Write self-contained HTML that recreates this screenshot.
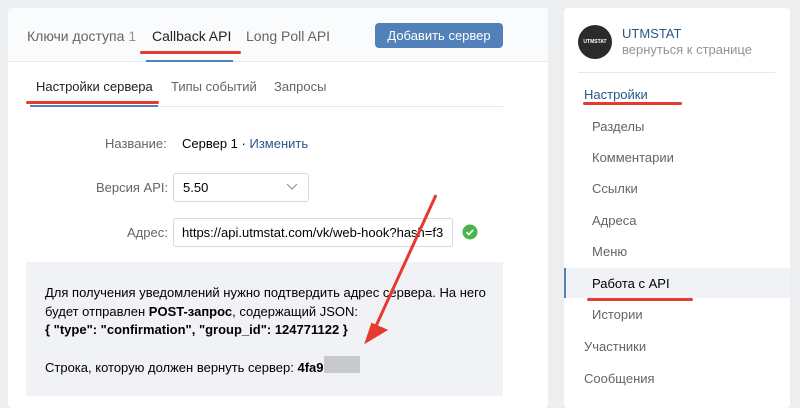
<!DOCTYPE html>
<html><head><meta charset="utf-8"><style>
*{margin:0;padding:0;box-sizing:border-box}
body{width:800px;height:400px;overflow:hidden;background:#edeef0;font-family:"Liberation Sans",sans-serif;font-size:13px;color:#000;position:relative}
.a{position:absolute;white-space:nowrap}
.card{position:absolute;background:#fff;border-radius:4px}
.g{color:#656565}
.m{color:#2a5885}
.red{position:absolute;height:3px;background:#e63a2e;border-radius:2px}
</style></head><body>
<div class="card" style="left:8px;top:8px;width:540px;height:400px"></div>
<div class="a" style="left:8px;top:8px;width:540px;height:54px;background:#fafbfc;border-bottom:1px solid #e7e8ec;border-radius:4px 4px 0 0"></div>
<div class="a g" style="left:27px;top:28px;font-size:14px">Ключи доступа <span style="color:#939393">1</span></div>
<div class="a" style="left:152px;top:28px;font-size:14px;color:#222">Callback API</div>
<div class="a g" style="left:246px;top:28px;font-size:14px">Long Poll API</div>
<div class="a" style="left:146px;top:60px;width:87px;height:2px;background:#5181b8"></div>
<div class="a" style="left:375px;top:23px;width:128px;height:25px;background:#5181b8;border-radius:4px;color:#fff;font-size:13px;text-align:center;line-height:25px">Добавить сервер</div>
<div class="a" style="left:30px;top:106px;width:473px;height:1px;background:#e7e8ec"></div>
<div class="a" style="left:30px;top:105px;width:128px;height:2px;background:#5181b8"></div>
<div class="a" style="left:36px;top:79px;color:#222;font-size:13px">Настройки сервера</div>
<div class="a g" style="left:171px;top:79px">Типы событий</div>
<div class="a g" style="left:274px;top:79px">Запросы</div>
<div class="a g" style="left:105px;top:136px">Название:</div>
<div class="a" style="left:182px;top:136px">Сервер 1 · <span class="m">Изменить</span></div>
<div class="a g" style="left:96px;top:180px">Версия API:</div>
<div class="a" style="left:173px;top:173px;width:136px;height:29px;border:1px solid #d3d9de;border-radius:3px;padding:6px 0 0 9px">5.50</div>
<svg class="a" style="left:286px;top:183px" width="12" height="8"><path d="M1 1l5 5 5-5" stroke="#939393" fill="none" stroke-width="1.2"/></svg>
<div class="a g" style="left:127px;top:225px">Адрес:</div>
<div class="a" style="left:173px;top:218px;width:280px;height:29px;border:1px solid #d3d9de;border-radius:3px;padding:6px 0 0 8px;overflow:hidden">https://api.utmstat.com/vk/web-hook?hash=f3</div>
<svg class="a" style="left:462px;top:224px" width="16" height="16"><circle cx="8" cy="8" r="7.5" fill="#4bb34b"/><path d="M4.5 8.2l2.3 2.3 4.5-4.6" stroke="#fff" stroke-width="1.7" fill="none"/></svg>
<div class="a" style="left:26px;top:262px;width:477px;height:134px;background:#f0f2f5"></div>
<div class="a" style="left:45px;top:284px;line-height:18.5px;color:#000">Для получения уведомлений нужно подтвердить адрес сервера. На него<br>будет отправлен <b>POST-запрос</b>, содержащий JSON:<br><b>{ "type": "confirmation", "group_id": 124771122 }</b></div>
<div class="a" style="left:45px;top:360px">Строка, которую должен вернуть сервер: <b>4fa9</b></div>
<div class="a" style="left:324px;top:356px;width:36px;height:17px;background:#c8c9cc"></div>
<div class="red" style="left:140px;top:51px;width:101px"></div>
<div class="red" style="left:26px;top:101px;width:133px"></div>
<svg class="a" style="left:0;top:0" width="800" height="400"><path d="M436 195L376 326" stroke="#e63a2e" stroke-width="3"/><path d="M366 342l20-12-14-6z" fill="#e63a2e" stroke="#e63a2e" stroke-width="2"/></svg>
<div class="card" style="left:564px;top:8px;width:226px;height:400px"></div>
<div class="a" style="left:578px;top:25px;width:34px;height:34px;border-radius:50%;background:#2b2b2b;color:#fff;font-size:5px;font-weight:bold;text-align:center;line-height:34px">UTMSTAT</div>
<div class="a" style="left:622px;top:26px;color:#2a5885">UTMSTAT</div>
<div class="a" style="left:622px;top:42px;color:#939393">вернуться к странице</div>
<div class="a" style="left:578px;top:72px;width:197px;height:1px;background:#e7e8ec"></div>
<div class="a" style="left:584px;top:87px;color:#2a5885">Настройки</div>
<div class="a g" style="left:592px;top:119px">Разделы</div>
<div class="a g" style="left:592px;top:150px">Комментарии</div>
<div class="a g" style="left:592px;top:181px">Ссылки</div>
<div class="a g" style="left:592px;top:213px">Адреса</div>
<div class="a g" style="left:592px;top:244px">Меню</div>
<div class="a" style="left:564px;top:268px;width:226px;height:30px;background:#f0f2f5;border-left:2px solid #5181b8"></div>
<div class="a" style="left:592px;top:276px;color:#000">Работа с API</div>
<div class="a g" style="left:592px;top:307px">Истории</div>
<div class="a g" style="left:584px;top:339px">Участники</div>
<div class="a g" style="left:584px;top:371px">Сообщения</div>
<div class="red" style="left:583px;top:102px;width:99px"></div>
<div class="red" style="left:587px;top:298px;width:106px"></div>
</body></html>
